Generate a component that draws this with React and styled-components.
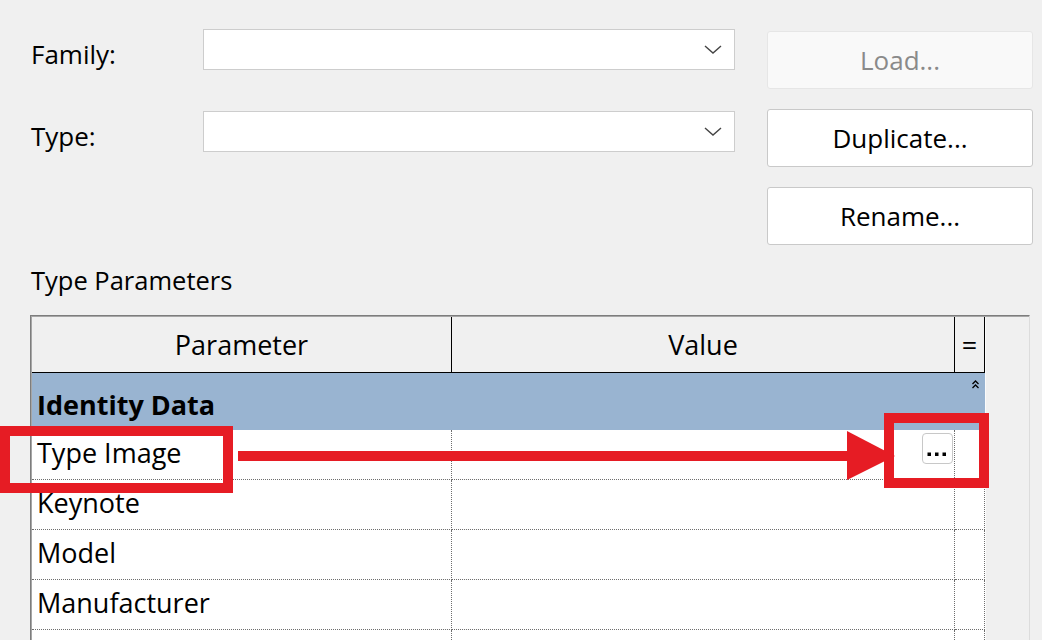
import React from "react";
import styled, { createGlobalStyle } from "styled-components";

const GlobalStyle = createGlobalStyle`
  html, body {
    margin: 0;
    padding: 0;
    background: #f0f0f0;
  }
  body {
    font-family: "Open Sans", "Noto Sans", sans-serif;
    color: #000;
  }
`;

const Page = styled.div`
  position: relative;
  box-sizing: border-box;
  width: 1042px;
  height: 640px;
  overflow: hidden;
  background: #f0f0f0;
  padding: 29px 0 0 30px;
`;

const Top = styled.div`
  display: flex;
  align-items: flex-start;
`;

const Fields = styled.div`
  flex: 0 0 705px;
  display: flex;
  flex-direction: column;
  gap: 41px;
`;

const Field = styled.div`
  display: grid;
  grid-template-columns: 173px 1fr;
  align-items: start;
  height: 41px;
`;

const Label = styled.label`
  font-size: 26px;
  line-height: 36px;
  margin: 7px 0 0 1px;
`;

const Combo = styled.div`
  box-sizing: border-box;
  height: 41px;
  background: #fff;
  border: 1px solid #cdcdcd;
  display: flex;
  align-items: center;
  justify-content: flex-end;
  padding-right: 12px;
`;

const Buttons = styled.div`
  flex: 0 0 266px;
  margin-left: 32px;
  margin-top: 2px;
  display: flex;
  flex-direction: column;
  gap: 20px;
`;

const Button = styled.button`
  box-sizing: border-box;
  height: 58px;
  width: 100%;
  border-radius: 3px;
  font-family: inherit;
  font-size: 26px;
  background: ${(p) => (p.disabled ? "#f9f9f9" : "#fff")};
  border: 1px solid ${(p) => (p.disabled ? "#e6e6e6" : "#c9c9c9")};
  color: ${(p) => (p.disabled ? "#8a8a8a" : "#000")};
  padding: 0;
`;

const SectionTitle = styled.div`
  font-size: 25.5px;
  line-height: 36px;
  margin: 17px 0 17px 1px;
`;

const Table = styled.div`
  box-sizing: border-box;
  width: 1000px;
  height: 400px;
  display: flex;
  border-top: 1px solid #7d7d7d;
  border-left: 1px solid #7d7d7d;
  border-right: 1px solid #dcdcdc;
  box-shadow: inset 1px 1px 0 #a6a6a6;
  padding: 1px 0 0 1px;
`;

const Grid = styled.div`
  flex: 0 0 953px;
  display: grid;
  grid-template-columns: 420px 503px 30px;
  grid-auto-rows: min-content;
  background: #fff;
`;

const Gutter = styled.div`
  flex: 1;
  background: #f0f0f0;
  border-left: 1px solid #fbfbfb;
`;

const HeadCell = styled.div`
  box-sizing: border-box;
  height: 56px;
  background: #f0f0f0;
  border-right: 1px solid #000;
  border-bottom: 1px solid #000;
  display: flex;
  align-items: center;
  justify-content: center;
  font-size: 27px;
`;

const Group = styled.div`
  grid-column: 1 / -1;
  box-sizing: border-box;
  height: 57px;
  background: #99b4d1;
  display: flex;
  justify-content: space-between;
  padding: 0 6px 0 5px;
`;

const GroupTitle = styled.div`
  font-size: 27px;
  font-weight: 700;
  align-self: center;
  padding-top: 5px;
`;

const Collapse = styled.svg`
  margin-top: 7px;
`;

const Cell = styled.div`
  box-sizing: border-box;
  height: 50px;
  border-right: 1px dotted #6e6e6e;
  border-bottom: 1px dotted #6e6e6e;
  display: flex;
  align-items: ${(p) => (p.$top ? "flex-start" : "center")};
  justify-content: ${(p) => (p.$end ? "flex-end" : "flex-start")};
  padding: ${(p) => (p.$top ? "3px 1px 0 0" : "0 0 5px 5px")};
  font-size: 27px;
`;

const MoreButton = styled.div`
  box-sizing: border-box;
  width: 31px;
  height: 31px;
  background: #fff;
  border: 1px solid #c8c8c8;
  border-radius: 4px;
`;

const Annotation = styled.svg`
  position: absolute;
  left: 0;
  top: 0;
  pointer-events: none;
`;

const Chevron = () => (
  <svg width="18" height="9" viewBox="0 0 18 9">
    <polyline points="1,1 9,8 17,1" fill="none" stroke="#444" strokeWidth="1.4" />
  </svg>
);

const rows = ["Type Image", "Keynote", "Model", "Manufacturer", ""];

export default function App() {
  return (
    <>
      <GlobalStyle />
      <Page>
        <Top>
          <Fields>
            <Field>
              <Label>Family:</Label>
              <Combo><Chevron /></Combo>
            </Field>
            <Field>
              <Label>Type:</Label>
              <Combo><Chevron /></Combo>
            </Field>
          </Fields>
          <Buttons>
            <Button disabled>Load...</Button>
            <Button>Duplicate...</Button>
            <Button>Rename...</Button>
          </Buttons>
        </Top>

        <SectionTitle>Type Parameters</SectionTitle>

        <Table>
          <Grid>
            <HeadCell>Parameter</HeadCell>
            <HeadCell>Value</HeadCell>
            <HeadCell>=</HeadCell>

            <Group>
              <GroupTitle>Identity Data</GroupTitle>
              <Collapse width="7" height="9" viewBox="0 0 7 9">
                <polyline points="0.5,4 3.5,1 6.5,4" fill="none" stroke="#000" strokeWidth="1.3" />
                <polyline points="0.5,8 3.5,5 6.5,8" fill="none" stroke="#000" strokeWidth="1.3" />
              </Collapse>
            </Group>

            {rows.map((name, i) => (
              <React.Fragment key={i}>
                <Cell>{name}</Cell>
                <Cell $top $end>
                  {i === 0 && (
                    <MoreButton>
                      <svg width="29" height="29" viewBox="0 0 29 29">
                        <rect x="4.5" y="18.5" width="3.5" height="3.5" fill="#000" />
                        <rect x="12" y="18.5" width="3.5" height="3.5" fill="#000" />
                        <rect x="19.5" y="18.5" width="3.5" height="3.5" fill="#000" />
                      </svg>
                    </MoreButton>
                  )}
                </Cell>
                <Cell />
              </React.Fragment>
            ))}
          </Grid>
          <Gutter />
        </Table>

        <Annotation width="1042" height="640" viewBox="0 0 1042 640">
          <rect x="5" y="431" width="223" height="57" fill="none" stroke="#e61c24" strokeWidth="10" />
          <rect x="238" y="451" width="612" height="10" fill="#e61c24" />
          <polygon points="847,431 895,456 847,480" fill="#e61c24" />
          <rect x="889" y="418" width="95" height="65" fill="none" stroke="#e61c24" strokeWidth="10" />
        </Annotation>
      </Page>
    </>
  );
}
